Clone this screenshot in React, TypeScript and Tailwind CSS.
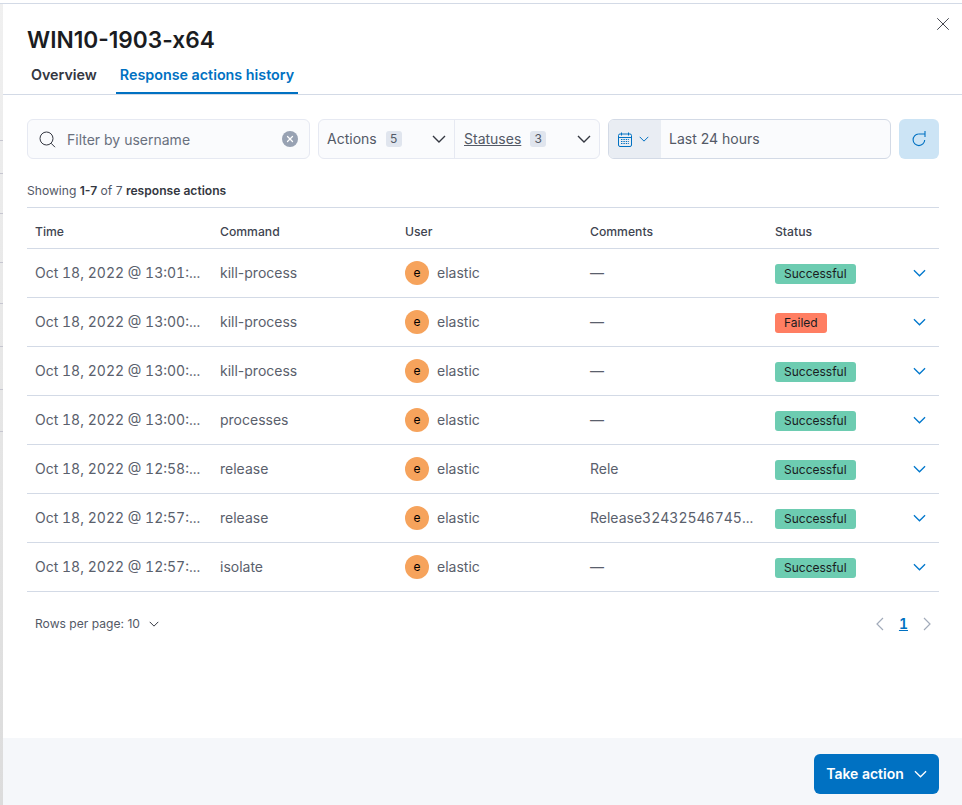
import { X } from "lucide-react";

const font = { fontFamily: "Inter, 'Liberation Sans', sans-serif" };

const rows = [
  { time: "Oct 18, 2022 @ 13:01:...", command: "kill-process", comment: "—", status: "Successful" },
  { time: "Oct 18, 2022 @ 13:00:...", command: "kill-process", comment: "—", status: "Failed" },
  { time: "Oct 18, 2022 @ 13:00:...", command: "kill-process", comment: "—", status: "Successful" },
  { time: "Oct 18, 2022 @ 13:00:...", command: "processes", comment: "—", status: "Successful" },
  { time: "Oct 18, 2022 @ 12:58:...", command: "release", comment: "Rele", status: "Successful" },
  { time: "Oct 18, 2022 @ 12:57:...", command: "release", comment: "Release32432546745...", status: "Successful" },
  { time: "Oct 18, 2022 @ 12:57:...", command: "isolate", comment: "—", status: "Successful" },
];

// Bits of the page table that peek out behind the flyout
const stripRows = ["h-[137px]", "h-[33px]", "h-[40px]", "h-[49px]", "h-[41px]", "h-[43px]", "h-[43px]", "h-[42px]"];

// Table columns are shared between header and rows
const cols = "grid grid-cols-[185px_185px_185px_185px_1fr_40px] items-center";

// EUI chevrons are wider and flatter than the lucide ones
function Chevron({ className }: { className: string }) {
  return (
    <svg className={className} viewBox="0 0 14 8" fill="none" stroke="currentColor" strokeWidth="1.4">
      <path d="M1 1l6 6 6-6" />
    </svg>
  );
}

function Row({ row }: { row: (typeof rows)[number] }) {
  return (
    <div className={`${cols} h-[49px] border-b border-[#d3dae6] text-[14px] text-[#5a606c]`}>
      <div className="pl-2 pb-[1px] whitespace-nowrap tabular-nums">{row.time}</div>
      <div className="pl-2 pb-[1px]">{row.command}</div>
      <div className="pl-2 flex items-center gap-2">
        <span className="w-6 h-6 rounded-full bg-[#f6a35c] flex items-center justify-center text-[12px] text-black">e</span>
        <span className="pb-[1px]">elastic</span>
      </div>
      <div className="pl-2 pb-[1px] whitespace-nowrap tabular-nums">{row.comment}</div>
      <div className="pl-2">
        <span className={`inline-block h-5 leading-5 px-[9px] rounded-[3px] text-[12px] text-[#1a1c21] ${row.status === "Failed" ? "bg-[#ff7e62]" : "bg-[#6dccb1]"}`}>
          {row.status}
        </span>
      </div>
      <div className="flex justify-center">
        <Chevron className="w-[13px] h-[8px] text-[#0077cc]" />
      </div>
    </div>
  );
}

export default function App() {
  return (
    <div className="h-[805px] w-[962px] flex bg-white overflow-hidden" style={font}>
      <div className="w-[3px] shrink-0 flex flex-col bg-linear-to-b from-[#f0f0f0] to-[#dcdcdc]">
        <div className="h-[4px] bg-white border-b border-[#d3dae6]"></div>
        {stripRows.map((h, i) => (
          <div key={i} className={`${h} border-b border-[#c6c6d0]`}></div>
        ))}
      </div>
      <div className="flex-1 flex flex-col min-w-0">
        <div className="h-[4px] bg-white border-b border-[#d3dae6]"></div>
        {/* Header */}
        <div className="relative h-[91px] border-b border-[#d3dae6] px-6">
          <X className="absolute right-[8px] top-[9px] w-[22px] h-[22px] text-[#343741]" strokeWidth={1} />
          <h2 className="pt-[20px] text-[22.7px] leading-8 font-semibold text-[#1a1c21]">WIN10-1903-x64</h2>
          <div className="flex mt-[1px]">
            <div className="px-1 h-[37px] pb-[2px] flex items-center text-[14.3px] font-semibold text-[#343741]">Overview</div>
            <div className="ml-[15px] px-1 h-[37px] flex items-center text-[14.3px] font-semibold text-[#0071c2] border-b-2 border-[#0071c2]">
              Response actions history
            </div>
          </div>
        </div>
        {/* Body */}
        <div className="flex-1 pl-6 pr-[23px] pt-6">
          <div className="flex gap-2 h-10">
            <div className="w-[283px] flex items-center pl-[11px] pr-[11px] rounded-md bg-[#fafbfd] border border-[#e6e9f2]">
              <svg className="w-[17px] h-[17px] text-[#343741]" viewBox="0 0 17 17" fill="none" stroke="currentColor" strokeWidth="1">
                <circle cx="7.5" cy="7.5" r="6.5" />
                <path d="M12 12.2l4 4" />
              </svg>
              <span className="ml-[11px] flex-1 text-[14px] text-[#69707d]">Filter by username</span>
              <span className="w-4 h-4 rounded-full bg-[#98a2b3] flex items-center justify-center">
                <X className="w-[10px] h-[10px] text-white" strokeWidth={3} />
              </span>
            </div>
            <div className="w-[282px] flex rounded-md bg-[#fafbfd] border border-[#e6e9f2] text-[14px] text-[#535966]">
              <div className="w-[136px] flex items-center pl-2 pr-2 border-r border-[#e6e9f2]">
                <span className="pb-[1px]">Actions</span>
                <span className="ml-[9px] w-4 h-4 rounded-[3px] bg-[#e0e5ee] flex items-center justify-center text-[12px]">5</span>
                <Chevron className="ml-auto w-[14px] h-[8px] text-[#343741]" />
              </div>
              <div className="flex-1 flex items-center pl-[9px] pr-[8px]">
                <span className="pb-[1px] underline">Statuses</span>
                <span className="ml-[9px] w-4 h-4 rounded-[3px] bg-[#e0e5ee] flex items-center justify-center text-[12px]">3</span>
                <Chevron className="ml-auto w-[14px] h-[8px] text-[#343741]" />
              </div>
            </div>
            <div className="w-[283px] flex rounded-md overflow-hidden bg-[#fafbfd] border border-[#d3dae6]">
              <div className="w-[52px] bg-[#e9edf3] flex items-center pl-[9px] gap-[7px] text-[#0071c2]">
                <svg className="w-[14px] h-[15px]" viewBox="0 0 14 15" fill="none" stroke="currentColor" strokeWidth="1">
                  <rect x="0.5" y="2" width="13" height="12.5" rx="1.5" />
                  <path d="M0.5 5.5h13M3.5 0.5v3M10.5 0.5v3" />
                  <path d="M3 7.5h8M3 9.5h8M3 11.5h8" strokeWidth="1.2" strokeDasharray="1.4 1" />
                </svg>
                <Chevron className="w-[10px] h-[6px]" />
              </div>
              <div className="flex-1 flex items-center pl-2 pb-[1px] text-[14px] text-[#535966]">Last 24 hours</div>
            </div>
            <div className="w-10 rounded-md bg-[#cce4f5] flex items-center justify-center">
              <svg className="w-[14px] h-[16px] text-[#0071c2]" viewBox="0 0 14 16" fill="none" stroke="currentColor" strokeWidth="1.1">
                <path d="M6.5 3A5.8 5.8 0 1 0 12.7 9" />
                <path d="M6.5 3h6.5M13 0v6" />
              </svg>
            </div>
          </div>

          <div className="mt-[25px] h-[14px] leading-[14px] text-[12.1px] text-[#535966]">
            Showing <span className="font-semibold text-[#343741]">1-7</span> of 7{" "}
            <span className="font-semibold text-[#343741]">response actions</span>
          </div>

          <div className="mt-[9px] border-t border-[#d3dae6]">
            <div className={`${cols} h-[41px] pt-2 border-b border-[#d3dae6] text-[12.2px] font-medium text-[#404450]`}>
              <div className="pl-2">Time</div>
              <div className="pl-2">Command</div>
              <div className="pl-2">User</div>
              <div className="pl-2">Comments</div>
              <div className="pl-2">Status</div>
              <div></div>
            </div>
            {rows.map((row, i) => (
              <Row key={i} row={row} />
            ))}
          </div>

          <div className="mt-[21px] flex items-center justify-between">
            <div className="pl-2 pt-[2px] flex items-center gap-[9px] text-[12.1px] text-[#535966]">
              Rows per page: 10
              <Chevron className="w-[10px] h-[6px] text-[#343741]" />
            </div>
            <div className="flex items-center gap-[15px] pr-2">
              <svg className="w-[8px] h-[14px] text-[#a2abba]" viewBox="0 0 8 14" fill="none" stroke="currentColor" strokeWidth="1.2">
                <path d="M7 1L1 7l6 6" />
              </svg>
              <span className="text-[14px] font-semibold text-[#0071c2] underline tabular-nums">1</span>
              <svg className="w-[8px] h-[14px] text-[#a2abba]" viewBox="0 0 8 14" fill="none" stroke="currentColor" strokeWidth="1.2">
                <path d="M1 1l6 6-6 6" />
              </svg>
            </div>
          </div>
        </div>
        {/* Footer */}
        <div className="h-[67px] bg-[#f5f7fa] flex items-start pt-4 pr-[23px] justify-end pl-6">
          <button className="h-10 w-[125px] rounded-md bg-[#0071c2] flex items-center justify-center gap-[10px] text-[14px] font-semibold text-white">
            <span className="pb-[1px]">Take action</span>
            <Chevron className="w-[13px] h-[8px]" />
          </button>
        </div>
      </div>
    </div>
  );
}
